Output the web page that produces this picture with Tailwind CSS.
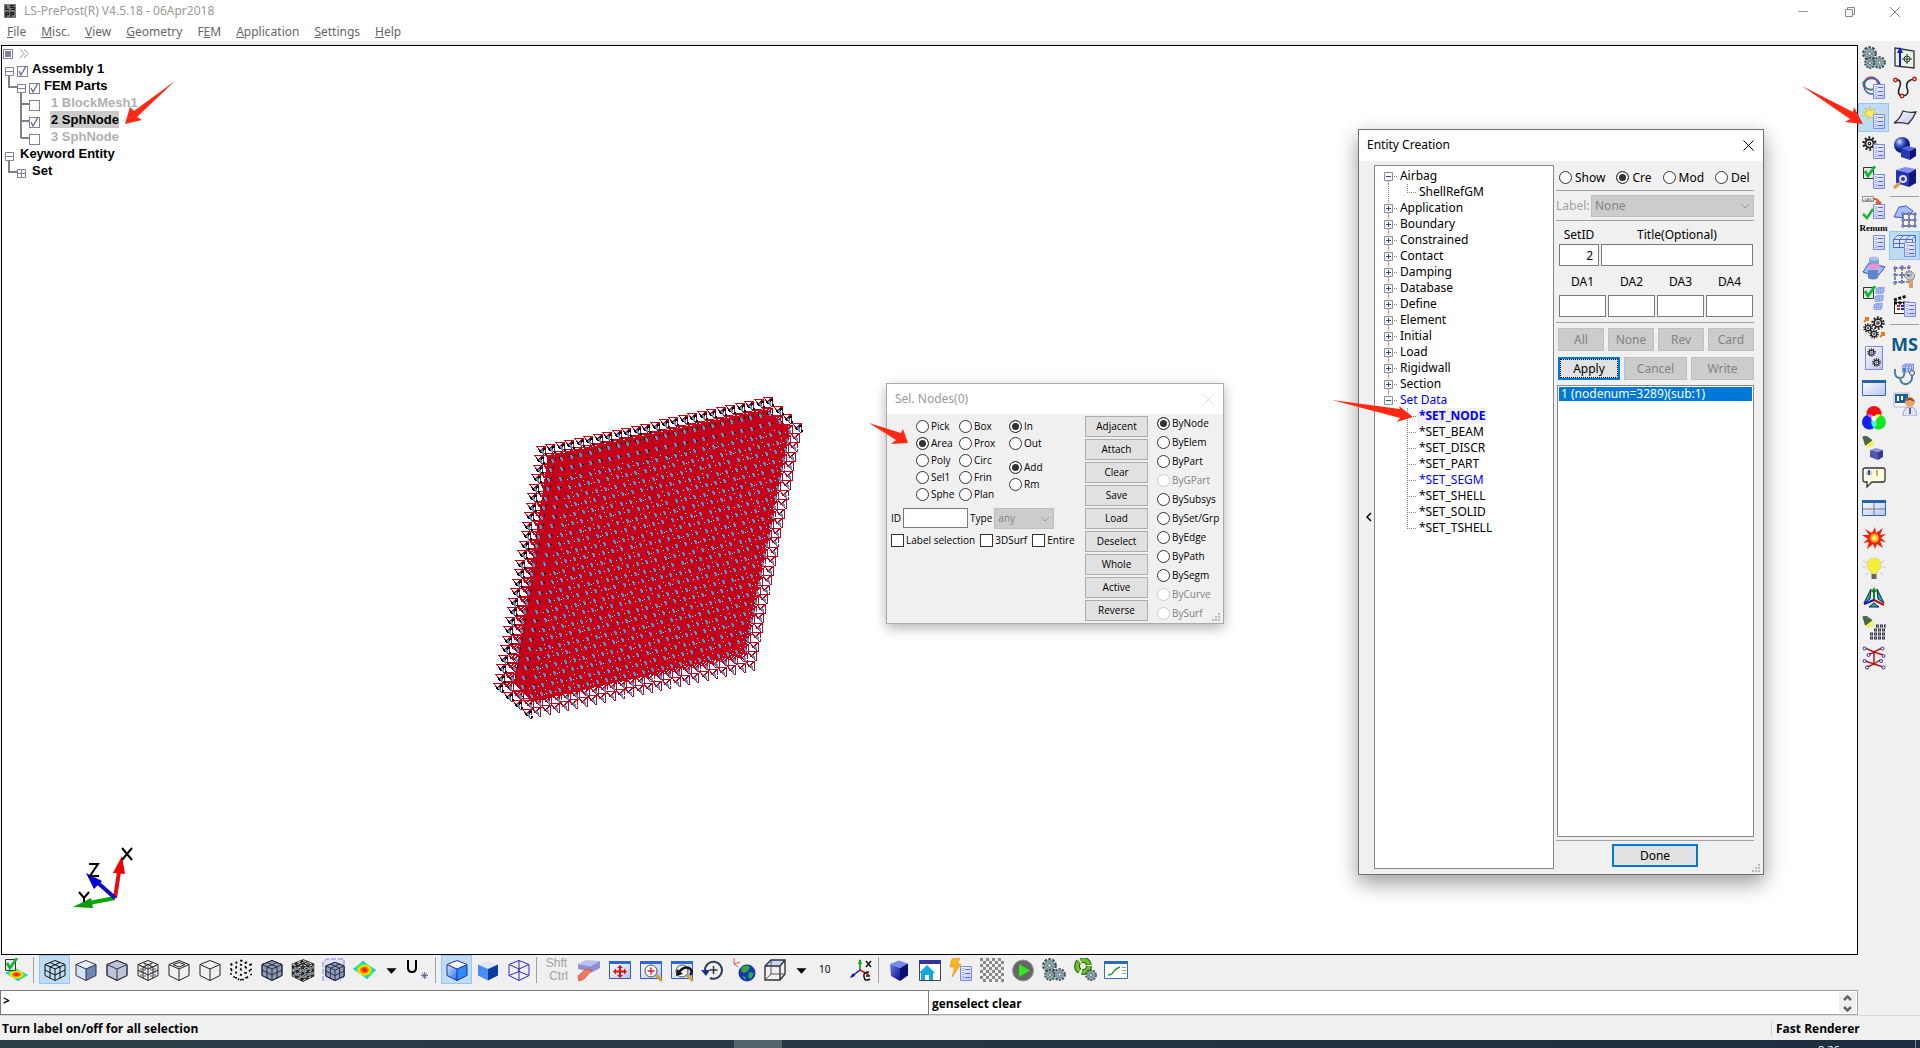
<!DOCTYPE html>
<html lang="en">
  <head>
    <meta charset="UTF-8" />
    <meta name="viewport" content="width=device-width, initial-scale=1.0" />
    <title>LS-PrePost(R) V4.5.18 - 06Apr2018</title>
    <script src="https://cdn.jsdelivr.net/npm/@tailwindcss/browser@4"></script>
  </head>
  <body class="relative flex h-screen flex-col overflow-hidden bg-[#f0f0f0] font-['Noto_Sans','Open_Sans',sans-serif] text-xs text-black">
    <!-- shared icon shapes -->
    <svg width="0" height="0" class="absolute">
      <defs>
        <linearGradient id="blueFace" x1="0" x2="1" y1="0" y2="1"><stop offset="0" stop-color="#dbe9ff" /><stop offset="1" stop-color="#1d6cf0" /></linearGradient>
        <linearGradient id="darkFace" x1="0" x2="1" y1="0" y2="1"><stop offset="0" stop-color="#6d7df0" /><stop offset="1" stop-color="#0a1080" /></linearGradient>
        <linearGradient id="paleFace" x1="0" x2="1" y1="0" y2="1"><stop offset="0" stop-color="#fff" /><stop offset="1" stop-color="#b8c4ee" /></linearGradient>
        <radialGradient id="heat"><stop offset="0" stop-color="#f00" /><stop offset=".3" stop-color="#f60" /><stop offset=".48" stop-color="#fe0" /><stop offset=".66" stop-color="#3e3" /><stop offset=".82" stop-color="#0de" /><stop offset="1" stop-color="#26f" /></radialGradient>
        <radialGradient id="ball" cx=".35" cy=".3"><stop offset="0" stop-color="#dfe8ff" /><stop offset=".5" stop-color="#3d5fd0" /><stop offset="1" stop-color="#0b1a80" /></radialGradient>
        <pattern id="checker" width="6" height="6" patternUnits="userSpaceOnUse"><path fill="#8a8a8a" d="M0 0h3v3H0zM3 3h3v3H3z" /></pattern>
        <symbol id="sheet" viewBox="0 0 24 24">
          <path fill="url(#paleFace)" stroke="#7c8adf" d="M11.500 8.500h11v14h-11z" />
          <path stroke="#5c6cc8" d="M16 11.500h5M16 15.500h5M16 19.500h5" />
          <path fill="#fff" stroke="#8f9be0" stroke-width=".7" d="M13 10.500h2v2h-2zM13 14.500h2v2h-2zM13 18.500h2v2h-2z" />
        </symbol>
        <symbol id="gear" viewBox="0 0 24 24">
          <circle cx="12" cy="12" r="9.500" fill="none" stroke="#222" stroke-width="4" stroke-dasharray="3 2.970" />
          <circle cx="12" cy="12" r="6.500" fill="#eee" stroke="#222" stroke-width="3" />
          <circle cx="12" cy="12" r="2" fill="#fff" stroke="#222" stroke-width="2" />
        </symbol>
        <symbol id="steelGear" viewBox="0 0 24 24">
          <circle cx="12" cy="12" r="9.500" fill="none" stroke="#3b4c50" stroke-width="4.500" stroke-dasharray="4 1.970" />
          <circle cx="12" cy="12" r="6.500" fill="#dcebf0" stroke="#7f9ca6" stroke-width="4.500" />
          <circle cx="12" cy="12" r="3" fill="#f4fafb" stroke="#2c3a3e" stroke-width="1.500" />
        </symbol>
        <symbol id="gears" viewBox="0 0 24 24">
          <use href="#steelGear" x="0" y="0" width="15" height="15" />
          <use href="#steelGear" x="2" y="11" width="12" height="12" />
          <use href="#steelGear" x="11" y="10" width="13" height="13" />
        </symbol>
        <symbol id="tick" viewBox="0 0 24 24">
          <path fill="#e8e8e8" stroke="#333" d="M1.500 3.500h10v11h-10z" />
          <path fill="none" stroke="#12b52c" stroke-width="2.800" d="M3 7l3 5 7-10" />
        </symbol>
        <symbol id="hex" viewBox="0 0 24 24"><path d="M12 2.500l10 4v11l-10 5-10-5v-11z" /></symbol>
        <symbol id="hexEdges" viewBox="0 0 24 24"><path fill="none" d="M12 2.500l10 4v11l-10 5-10-5v-11zM2 6.500l10 4.500 10-4.500M12 11v11.500" /></symbol>
        <symbol id="hexMesh" viewBox="0 0 24 24">
          <path fill="none" d="M12 2.500l10 4v11l-10 5-10-5v-11zM2 6.500l10 4.500 10-4.500M12 11v11.500M2 12l10 5 10-5M7 9v11.500M17 9v11.500M7 4.500l10 4.500M17 4.500l-10 4.500" />
        </symbol>
        <symbol id="window" viewBox="0 0 24 24">
          <path fill="url(#paleFace)" stroke="#2f5fc8" d="M1.500 3.500h21v17h-21z" />
          <path fill="#3067d8" d="M1 3h22v3H1z" />
        </symbol>
        <symbol id="lamp" viewBox="0 0 24 24">
          <path fill="#f4ee5a" d="M4 10l8-5 3 5-8 5z" />
          <path fill="#49694a" stroke="#24402a" stroke-width=".7" d="M1 1l4-1 7 5-8 6z" />
        </symbol>
        <symbol id="miniMesh" viewBox="0 0 24 24">
          <path fill="#c6d5ff" stroke="#4a66d8" stroke-width="1.200" d="M1 8l4-4h18v12l-4 4H1zM1 8h18v12M19 8l4-4M1 14h18l4-4M7 20V8l4-4M13 20V8l4-4" />
        </symbol>
      </defs>
    </svg>

    <header class="bg-white text-[#666]">
      <div class="flex h-[22px] items-center justify-between">
        <div class="flex items-center gap-2 pl-1 text-[#999]">
          <svg class="h-[14px] w-[12px]" viewBox="0 0 12 14"><path fill="#777" d="M0 0h12v14H0z" /><path fill="none" stroke="#111" stroke-width="1.200" d="M2 1.500v4h3M10 1.500H7v2h3v2H7M2 13V8.500h2.500v2H2M7 13V8.500h2.500v2H7" /></svg>
          <h1>LS-PrePost(R) V4.5.18 - 06Apr2018</h1>
        </div>
        <div class="flex gap-[27px] pr-[15px]">
          <button aria-label="Minimize"><svg class="size-[19px]" fill="none" stroke="#999"><path d="M4 9.500h10" /></svg></button>
          <button aria-label="Restore"><svg class="size-[19px]" fill="none" stroke="#888"><path d="M5.500 7.500h7v7h-7zM7.500 7V5.500h7v7H13" /></svg></button>
          <button aria-label="Close"><svg class="size-[19px]" fill="none" stroke="#888"><path d="M4 5l10 10M14 5L4 15" /></svg></button>
        </div>
      </div>
      <nav class="flex h-[19px] items-center gap-[15px] pt-px pl-[7px]">
        <a href="#"><u>F</u>ile</a>
        <a href="#"><u>M</u>isc.</a>
        <a href="#"><u>V</u>iew</a>
        <a href="#"><u>G</u>eometry</a>
        <a href="#">F<u>E</u>M</a>
        <a href="#"><u>A</u>pplication</a>
        <a href="#"><u>S</u>ettings</a>
        <a href="#"><u>H</u>elp</a>
      </nav>
    </header>

    <div class="flex min-h-0 flex-1">
      <div class="flex min-w-0 flex-1 flex-col pt-1">
        <!-- model view -->
        <main class="relative ml-px min-h-0 flex-1 border border-black bg-white">
          <svg class="absolute top-0 left-0 h-[140px] w-[60px]" fill="none" stroke="#808080" stroke-width="2">
            <path d="M7 27v14h10M19 44v48M19 58h10M19 75h10M19 92h10M7 113v13h10" />
          </svg>
          <div class="relative font-['Liberation_Sans',sans-serif] text-[13px] font-bold leading-[17px]">
            <div class="flex h-[14px] items-center gap-1 pl-px pt-px">
              <button aria-label="Dock" class="size-[10px] border border-[#8080a0] bg-[#8080a0] shadow-[inset_0_0_0_1px_#fff]"></button>
              <button aria-label="Expand" class="pl-[2px]"><svg class="size-[11px]" fill="none" stroke="#9a9ab4"><path d="M1 1l4 4.500-4 4.500M5 1l4 4.500-4 4.500" /></svg></button>
            </div>
            <ul class="[&_input]:mt-[6px] [&_input]:size-[11px] [&_input]:shrink-0 [&_input]:appearance-none [&_input]:border [&_input]:border-[#8080a0] [&_input]:bg-white [&_label]:flex [&_label]:items-center [&_li]:flex [&_li]:h-[17px] [&_li]:items-center [&_svg]:mt-[6px] [&_svg]:shrink-0 [&_svg]:bg-white">
              <li class="gap-[3px] pl-[3px]"><svg class="size-[9px]" fill="none" stroke="#8080a0"><path d="M.5.5h8v8h-8zM1 4.500h7" /></svg><label class="gap-1"><input type="checkbox" checked />Assembly 1</label></li>
              <li class="gap-[3px] pl-[15px]"><svg class="size-[9px]" fill="none" stroke="#8080a0"><path d="M.5.5h8v8h-8zM1 4.500h7" /></svg><label class="gap-1"><input type="checkbox" checked />FEM Parts</label></li>
              <li class="pl-[27px] text-[#b0b0b0]"><label class="gap-[11px]"><input type="checkbox" />1 BlockMesh1</label></li>
              <li class="pl-[27px]"><label class="gap-[10px]"><input type="checkbox" checked /><span class="bg-[#cbcbcb] pl-px">2 SphNode</span></label></li>
              <li class="pl-[27px] text-[#b0b0b0]"><label class="gap-[11px]"><input type="checkbox" />3 SphNode</label></li>
              <li class="gap-[6px] pl-[3px]"><svg class="size-[9px]" fill="none" stroke="#8080a0"><path d="M.5.5h8v8h-8zM1 4.500h7" /></svg>Keyword Entity</li>
              <li class="gap-[6px] pl-[15px]"><svg class="size-[9px]" fill="none" stroke="#8080a0"><path d="M.5.5h8v8h-8zM1 4.500h7M4.500 1v7" /></svg>Set</li>
            </ul>
          </div>
          <!-- check marks of the part tree -->
          <svg class="pointer-events-none absolute top-0 left-0 h-[100px] w-[50px]" fill="none" stroke="#70709a" stroke-width="1.500">
            <path d="M17 25l2 4 5-9M29 42l2 4 5-9M29 76l2 4 5-9" />
          </svg>

          <svg id="mesh" class="absolute top-[344px] left-[480px] h-[340px] w-[340px]" shape-rendering="crispEdges" fill="none"></svg>

          <svg class="absolute bottom-[40px] left-[68px] h-[70px] w-[70px]" viewBox="70 844 70 70">
            <g stroke-width="4"><path stroke="#0a0" d="M115 898l-26 5" /><path stroke="#d11" d="M115 898l4-26" /><path stroke="#1010b8" d="M115 898l-18-16" /></g>
            <path fill="#0a9a0a" d="M73 907l18-9 2 10z" /><path fill="#e00" d="M122 856l3 18-12-1z" /><path fill="#0000d8" d="M86 873l16 8-8 8z" />
            <g fill="none" stroke="#000" stroke-width="2"><path d="M79 892l5 6 5-6M84 898v4" /><path d="M122 848l10 12M132 848l-10 12" /><path d="M89 864h9l-8 12h9" /></g>
          </svg>

          <!-- Sel. Nodes window -->
          <section class="absolute top-[337px] left-[884px] flex h-[241px] w-[338px] flex-col border border-[#aaa] bg-[#f0f0f0] font-['Open_Sans',sans-serif] text-[10px] leading-[17px] shadow-[0_4px_12px_rgba(0,0,0,0.3)]">
            <div class="flex h-[30px] shrink-0 items-center justify-between bg-white pr-[9px] pl-2 font-['Noto_Sans',sans-serif] text-xs text-[#999]">
              <h2>Sel. Nodes(0)</h2>
              <button aria-label="Close"><svg class="size-[11px]" fill="none" stroke="#ddd"><path d="M.5.5l10 10M10.500.5l-10 10" /></svg></button>
            </div>
            <div class="flex flex-1 [&_input[type=radio]]:size-[13px] [&_input[type=radio]]:shrink-0 [&_input[type=radio]]:appearance-none [&_input[type=radio]]:rounded-full [&_input[type=radio]]:border [&_input[type=radio]]:border-[#333] [&_input[type=radio]]:bg-white [&_input[type=radio]:checked]:bg-[#333] [&_input[type=radio]:checked]:shadow-[inset_0_0_0_2px_#fff] [&_input[type=radio]:disabled]:border-[#ccc] [&_label]:flex [&_label]:items-center [&_label]:gap-[2px] [&_label]:whitespace-nowrap">
              <div class="w-[198px] shrink-0 pt-1">
                <div class="flex pl-[29px]">
                  <div class="w-[43px]">
                    <label><input type="radio" name="pick" />Pick</label>
                    <label><input type="radio" name="pick" checked />Area</label>
                    <label><input type="radio" name="pick" />Poly</label>
                    <label><input type="radio" name="pick" />Sel1</label>
                    <label><input type="radio" name="pick" />Sphe</label>
                  </div>
                  <div class="w-[50px]">
                    <label><input type="radio" name="pick" />Box</label>
                    <label><input type="radio" name="pick" />Prox</label>
                    <label><input type="radio" name="pick" />Circ</label>
                    <label><input type="radio" name="pick" />Frin</label>
                    <label><input type="radio" name="pick" />Plan</label>
                  </div>
                  <div>
                    <label><input type="radio" name="side" checked />In</label>
                    <label><input type="radio" name="side" />Out</label>
                    <div class="h-[7px]"></div>
                    <label><input type="radio" name="mode" checked />Add</label>
                    <label><input type="radio" name="mode" />Rm</label>
                  </div>
                </div>
                <div class="mt-1 flex h-[22px] items-center gap-[2px] pl-1">
                  <label for="nodeId">ID</label>
                  <input id="nodeId" type="text" class="h-[20px] w-[65px] border border-[#7a7a7a] bg-white px-1" />
                  <label for="nodeType">Type</label>
                  <div class="relative">
                    <select id="nodeType" disabled class="block h-[21px] w-[60px] appearance-none border border-[#bfbfbf] bg-[#ccc] px-[3px] text-[#838383]"><option>any</option></select>
                    <svg class="absolute top-2 right-[5px] h-[6px] w-[8px]" fill="none" stroke="#999"><path d="M0 1l4 4 4-4" /></svg>
                  </div>
                </div>
                <div class="mt-[3px] flex gap-[5px] pl-1 [&_input]:size-[13px] [&_input]:appearance-none [&_input]:border [&_input]:border-[#333] [&_input]:bg-white">
                  <label><input type="checkbox" />Label selection</label>
                  <label><input type="checkbox" />3DSurf</label>
                  <label><input type="checkbox" />Entire</label>
                </div>
              </div>
              <div class="flex w-[63px] shrink-0 flex-col gap-[2px] pt-[2px] [&_button]:h-[21px] [&_button]:border [&_button]:border-[#adadad] [&_button]:bg-[#e1e1e1]">
                <button>Adjacent</button>
                <button>Attach</button>
                <button>Clear</button>
                <button>Save</button>
                <button>Load</button>
                <button>Deselect</button>
                <button>Whole</button>
                <button>Active</button>
                <button>Reverse</button>
              </div>
              <div class="pl-[9px] [&_label]:h-[19px]">
                <label><input type="radio" name="by" checked />ByNode</label>
                <label><input type="radio" name="by" />ByElem</label>
                <label><input type="radio" name="by" />ByPart</label>
                <label class="text-[#838383]"><input type="radio" name="by" disabled />ByGPart</label>
                <label><input type="radio" name="by" />BySubsys</label>
                <label><input type="radio" name="by" />BySet/Grp</label>
                <label><input type="radio" name="by" />ByEdge</label>
                <label><input type="radio" name="by" />ByPath</label>
                <label><input type="radio" name="by" />BySegm</label>
                <label class="text-[#838383]"><input type="radio" name="by" disabled />ByCurve</label>
                <label class="text-[#838383]"><input type="radio" name="by" disabled />BySurf</label>
              </div>
            </div>
            <svg class="absolute right-[3px] bottom-[2px] size-[8px]" fill="#bbb"><path d="M6 0h2v2H6zM3 3h2v2H3zM6 3h2v2H6zM0 6h2v2H0zM3 6h2v2H3zM6 6h2v2H6z" /></svg>
          </section>

          <!-- Entity Creation window -->
          <section class="absolute top-[83px] left-[1356px] flex h-[746px] w-[406px] flex-col border border-[#707070] bg-[#f0f0f0] leading-[16px] shadow-[0_8px_20px_rgba(0,0,0,0.4)]">
            <div class="flex h-[31px] shrink-0 items-center justify-between bg-white pr-[9px] pb-px pl-2">
              <h2>Entity Creation</h2>
              <button aria-label="Close"><svg class="size-[11px]" fill="none" stroke="#000"><path d="M.5.5l10 10M10.500.5l-10 10" /></svg></button>
            </div>
            <div class="flex min-h-0 flex-1 pt-1 pb-[5px]">
              <button aria-label="Collapse" class="flex w-[15px] items-center justify-end pr-[2px]"><svg class="h-[10px] w-[6px]" fill="none" stroke="#000" stroke-width="1.500"><path d="M5 1L1 5l4 4" /></svg></button>
              <div class="w-[181px] border border-[#828790] bg-white pt-[2px] pl-[9px]">
                <ul id="entityTree"></ul>
              </div>
              <form class="flex flex-1 flex-col pt-1 pr-[9px] pl-[2px] [&_hr]:border-t [&_hr]:border-[#a0a0a0] [&_input[type=text]]:h-[22px] [&_input[type=text]]:border [&_input[type=text]]:border-[#7a7a7a] [&_input[type=text]]:bg-white [&_input[type=text]]:px-[5px]">
                <div class="flex h-[21px] shrink-0 items-center gap-[11px] pb-1 pl-[3px] [&_input]:size-[13px] [&_input]:appearance-none [&_input]:rounded-full [&_input]:border [&_input]:border-[#333] [&_input]:bg-white [&_input:checked]:bg-[#333] [&_input:checked]:shadow-[inset_0_0_0_2px_#fff] [&_label]:flex [&_label]:items-center [&_label]:gap-[3px]">
                  <label><input type="radio" name="action" />Show</label>
                  <label><input type="radio" name="action" checked />Cre</label>
                  <label><input type="radio" name="action" />Mod</label>
                  <label><input type="radio" name="action" />Del</label>
                </div>
                <hr />
                <div class="flex h-[29px] shrink-0 items-center">
                  <label for="entityLabel" class="w-[35px] text-[#a0a0a0]">Label:</label>
                  <div class="relative flex-1">
                    <select id="entityLabel" disabled class="block h-[22px] w-full appearance-none border border-[#bfbfbf] bg-[#ccc] px-[3px] text-[#838383]"><option>None</option></select>
                    <svg class="absolute top-2 right-1 h-[6px] w-[9px]" fill="none" stroke="#999"><path d="M0 1l4 4 4-4" /></svg>
                  </div>
                </div>
                <hr />
                <div class="flex gap-[2px] pt-[6px] pl-[3px]">
                  <div class="flex w-[40px] flex-col"><label for="setId" class="h-[17px] text-center">SetID</label><input id="setId" type="text" value="2" class="w-[40px] text-right" /></div>
                  <div class="flex w-[152px] flex-col"><label for="setTitle" class="h-[17px] text-center">Title(Optional)</label><input id="setTitle" type="text" class="w-[152px]" /></div>
                </div>
                <div class="flex gap-[2px] pt-2 pl-[3px] [&_div]:flex [&_div]:flex-col [&_input]:w-[47px] [&_label]:h-[21px] [&_label]:text-center">
                  <div><label for="da1">DA1</label><input id="da1" type="text" /></div>
                  <div><label for="da2">DA2</label><input id="da2" type="text" /></div>
                  <div><label for="da3">DA3</label><input id="da3" type="text" /></div>
                  <div><label for="da4">DA4</label><input id="da4" type="text" /></div>
                </div>
                <hr class="mt-[5px]" />
                <div class="flex gap-1 pt-[5px] pl-[2px] [&_button]:h-[23px] [&_button]:w-[46px] [&_button]:border [&_button]:border-[#bfbfbf] [&_button]:bg-[#ccc] [&_button]:text-[#838383]">
                  <button type="button" disabled>All</button>
                  <button type="button" disabled>None</button>
                  <button type="button" disabled>Rev</button>
                  <button type="button" disabled>Card</button>
                </div>
                <div class="flex gap-1 pt-[6px] pl-[2px]">
                  <button type="button" class="h-[23px] w-[62px] border-2 border-[#0078d7] bg-[#e1e1e1] outline-1 -outline-offset-3 outline-dotted outline-black">Apply</button>
                  <button type="button" disabled class="h-[23px] w-[63px] border border-[#bfbfbf] bg-[#ccc] text-[#838383]">Cancel</button>
                  <button type="button" disabled class="h-[23px] w-[63px] border border-[#bfbfbf] bg-[#ccc] text-[#838383]">Write</button>
                </div>
                <ul class="mt-[5px] ml-px flex-1 border border-[#828790] bg-white p-px">
                  <li class="h-[14px] bg-[#0078d7] pl-[2px] leading-[14px] text-white">1 (nodenum=3289)(sub:1)</li>
                </ul>
                <hr class="mt-[3px]" />
                <button type="button" class="mt-[3px] mb-[2px] h-[23px] w-[86px] shrink-0 self-center border-2 border-[#0078d7] bg-[#e1e1e1]">Done</button>
              </form>
            </div>
            <svg class="absolute right-[3px] bottom-[2px] size-[8px]" fill="#bbb"><path d="M6 0h2v2H6zM3 3h2v2H3zM6 3h2v2H6zM0 6h2v2H0zM3 6h2v2H3zM6 6h2v2H6z" /></svg>
          </section>
        </main>

        <!-- view toolbar -->
        <div class="flex h-[35px] shrink-0 items-start [&_button]:flex [&_button]:h-[29px] [&_button]:w-[31px] [&_button]:shrink-0 [&_button]:items-center [&_button]:justify-center [&_svg]:size-[24px]">
          <button aria-label="Plot"><svg viewBox="0 0 24 24"><path fill="url(#heat)" d="M1 15l10-5 13 7-10 6z" /><use href="#tick" width="24" height="24" y="-2" /></svg></button>
          <div class="mt-[2px] mr-[5px] ml-[2px] h-[26px] w-px bg-[#a0a0a0]"></div>
          <button aria-label="Mesh" class="border border-[#90c8f6] bg-[#c0dcf3]"><svg stroke="#111" fill="none"><use href="#hexMesh" width="24" height="24" /></svg></button>
          <button aria-label="Shaded"><svg viewBox="0 0 24 24"><path fill="#e6eeff" d="M12 2.500l10 4-10 4.500L2 6.500z" /><path fill="#d4e0fa" d="M2 6.500L12 11v11.500l-10-5z" /><path fill="#6f83b4" d="M12 11l10-4.500v11l-10 5z" /><use href="#hexEdges" width="24" height="24" stroke="#334" /></svg></button>
          <button aria-label="Flat"><svg fill="#bcc4da" stroke="#334"><use href="#hex" width="24" height="24" /><use href="#hexEdges" width="24" height="24" /></svg></button>
          <button aria-label="Hidden"><svg stroke="#222" viewBox="0 0 24 24"><use href="#hexMesh" width="24" height="24" /><path fill="none" stroke="#556" stroke-dasharray="2 1" d="M5 7v12M19 7v12M9 5v16M15 5v16M3 14l9-5 9 5" /></svg></button>
          <button aria-label="Feature"><svg stroke="#222" viewBox="0 0 24 24"><use href="#hexEdges" width="24" height="24" /><path fill="none" d="M6 6.500l6-2 6 2-6 2.500z" /></svg></button>
          <button aria-label="Edge"><svg stroke="#222"><use href="#hexEdges" width="24" height="24" /></svg></button>
          <button aria-label="Points"><svg stroke="#111" stroke-width="2" stroke-dasharray="1.500 3.500"><use href="#hexMesh" width="24" height="24" /></svg></button>
          <button aria-label="Shaded mesh"><svg fill="#8f9dba" stroke="#222b3c"><use href="#hex" width="24" height="24" /><use href="#hexMesh" width="24" height="24" /></svg></button>
          <button aria-label="Shrink"><svg fill="#8f9dba" stroke="#222" viewBox="0 0 24 24"><use href="#hex" width="24" height="24" /><use href="#hexMesh" width="24" height="24" stroke-width="2.500" /><use href="#hexMesh" width="24" height="24" stroke="#e8e8e8" stroke-width="1" stroke-dasharray="3 3" /></svg></button>
          <button aria-label="Transparent"><svg viewBox="0 0 24 24"><path fill="#dfe2f8" stroke="#7c80e8" stroke-dasharray="5 2" d="M1 23V4l4-3h17v18l-4 4" /><g fill="#8f9dba" stroke="#222b3c"><use href="#hex" x="2" y="2" width="22" height="22" /><use href="#hexMesh" x="2" y="2" width="22" height="22" /></g></svg></button>
          <button aria-label="Fringe"><svg viewBox="0 0 24 24"><path fill="url(#heat)" d="M0 11l10-8 13 9-9 9z" /></svg></button>
          <button aria-label="Fringe options" class="max-w-[22px]"><svg viewBox="0 0 24 24"><path d="M7 10h11l-5.500 6z" /></svg></button>
          <button aria-label="Unreferenced nodes"><svg viewBox="0 0 24 24" fill="none"><path stroke="#000" stroke-width="2" d="M2 2v8q0 4 4 4t4-4V2" /><path stroke="#6a6a9a" d="M15 17.500h7M18.500 14v7M16 15l5 5M21 15l-5 5" /></svg></button>
          <div class="mt-[2px] mr-[5px] ml-[2px] h-[26px] w-px bg-[#a0a0a0]"></div>
          <button aria-label="Solid view" class="border border-[#90c8f6] bg-[#c0dcf3]"><svg viewBox="0 0 24 24"><path fill="#fff" d="M12 2.500l10 4-10 4.500L2 6.500z" /><path fill="url(#blueFace)" d="M2 6.500L12 11v11.500l-10-5z" /><path fill="#2c8cf8" d="M12 11l10-4.500v11l-10 5z" /><use href="#hexEdges" width="24" height="24" stroke="#1c2f9c" /></svg></button>
          <button aria-label="Smooth view"><svg viewBox="0 0 24 24"><path fill="#e0e5ee" d="M12 2.500l10 4-10 4.500L2 6.500z" /><path fill="#4c8cf5" d="M2 6.500L12 11v11.500l-10-5z" /><path fill="#0c3ca0" d="M12 11l10-4.500v11l-10 5z" /></svg></button>
          <button aria-label="Wire view"><svg stroke="#2b2bc4" fill="none"><use href="#hexEdges" width="24" height="24" /><path d="M12 2.500v11l10 4M12 13.500l-10 4" /></svg></button>
          <div class="mt-[2px] mr-[5px] ml-[2px] h-[26px] w-px bg-[#a0a0a0]"></div>
          <button class="flex-col pr-[2px] font-['Liberation_Sans',sans-serif] leading-[13px] text-[#a0a0a0]"><span>Shft</span><span class="pl-1">Ctrl</span></button>
          <button aria-label="Clear highlight"><svg viewBox="0 0 24 24"><path fill="#b9c0ee" d="M1 6l8-4 14 1-7 5z" /><path fill="#8d93d2" d="M1 6l13 2v6L1 11zM14 8l9-5v7l-9 5z" /><path fill="#f0785c" stroke="#c8442a" stroke-width=".7" d="M1 18l8-7 6 1-8 9-5 2z" /></svg></button>
          <button aria-label="Auto center"><svg viewBox="0 0 24 24"><use href="#window" width="24" height="24" /><path fill="#d01818" d="M12 7l3 3h-2v2.500h3v-2l3 3-3 3v-2h-3V17h2l-3 3-3-3h2v-2.500H8v2l-3-3 3-3v2h3V10H9z" /></svg></button>
          <button aria-label="Zoom in"><svg viewBox="0 0 24 24"><use href="#window" width="24" height="24" /><path stroke="#d5a030" stroke-width="3" d="M17 17l6 6" /><circle cx="12" cy="13" r="6" fill="#f6f8ff" stroke="#555" /><path stroke="#d22" stroke-width="1.500" d="M8.500 13h7M12 9.500v7" /></svg></button>
          <button aria-label="Zoom back"><svg viewBox="0 0 24 24" fill="none"><use href="#window" width="24" height="24" /><path stroke="#d5a030" stroke-width="3" d="M17 17l6 6" /><circle cx="12" cy="13" r="6" fill="#f6f8ff" stroke="#555" /><path stroke="#111" stroke-width="2.500" d="M9 14q5-6 10-4 5 3 1 7" /><path fill="#111" d="M6 18l1-7 6 5z" /></svg></button>
          <button aria-label="Rotate"><svg viewBox="0 0 24 24" fill="none"><path stroke="#33415c" stroke-width="2" d="M4 13a8.500 8.500 0 1 1 5 7" /><path fill="#14328c" d="M0 12h9l-4 6z" /><path stroke="#333" stroke-width="1.500" d="M8.500 12h8M12.500 8v8" /></svg></button>
          <button aria-label="Globe"><svg viewBox="0 0 24 24"><path fill="none" stroke="#d55" d="M2 0v6l4 3M2 6l6-2" /><circle cx="15" cy="15" r="8.500" fill="#1b32b8" /><path fill="#2fae38" d="M10 9q5-3 8 0l-2 4-4 2-3-2zM17 14l5 1-3 6-3-2zM10 18l4 1-1 3z" /></svg></button>
          <button aria-label="View box"><svg viewBox="0 0 24 24"><path fill="#c7d3ff" d="M2 8l6-6h14l-5 6z" /><path fill="none" stroke="#333" stroke-width="1.400" d="M2 8l6-6h14v14l-5 6H2zM2 8h15v14M17 8l5-6" /><path fill="none" stroke="#555" d="M8 3v13h13M8 16l-6 6" /></svg></button>
          <button aria-label="View options" class="max-w-[22px]"><svg viewBox="0 0 24 24"><path d="M7 10h11l-5.500 6z" /></svg></button>
          <input type="text" aria-label="Rotation step" value="10" class="mt-[7px] h-[14px] w-[33px] bg-transparent pl-[7px] text-[10px] leading-[14px]" />
          <button aria-label="Axes"><svg viewBox="0 0 24 24" fill="none" stroke-width="1.500"><path stroke="#080" d="M11 12V2" /><path stroke="#11c" d="M11 12l-9 7" /><path stroke="#c11" d="M11 12l9 5" /><path fill="#0a0" d="M9 6l2-5 2 5z" /><path fill="#11c" d="M1 20l3-5 2 3z" /><path stroke="#111" d="M17 3l5 6M22 3l-5 6M20 14q-6 0-5 5t6 2M17 18h4" /></svg></button>
          <div class="mt-[2px] mr-[4px] ml-[2px] h-[26px] w-px bg-[#a0a0a0]"></div>
          <button aria-label="Part"><svg viewBox="0 0 24 24"><path fill="#7a8ae8" d="M12 2.500l9 3-8 4.500L3 6z" /><path fill="url(#darkFace)" d="M3 6l10 4v13L4 18z" /><path fill="#0a0f72" d="M13 10l8-4.500v12L13 23z" /></svg></button>
          <button aria-label="Home"><svg viewBox="0 0 24 24"><path fill="#fff" stroke="#444" d="M1.500 2.500h21v20h-21z" /><path fill="#33339c" d="M1 2h22v4H1z" /><path fill="#12a8dc" d="M1 15l8-8 8 8h-2v7h-4v-5H7v5H3v-7z" /></svg></button>
          <button aria-label="Quick keyword"><svg viewBox="0 0 24 24"><path fill="#ffb81e" stroke="#e8820a" stroke-width=".7" d="M3 1l8-1-3 6 4 0-9 13 3-10H1z" /><use href="#sheet" width="24" height="24" /></svg></button>
          <button aria-label="Checker"><svg><path fill="url(#checker)" d="M0 0h24v24H0z" /></svg></button>
          <button aria-label="Run"><svg viewBox="0 0 24 24"><circle cx="12" cy="12.500" r="10.500" fill="#666" stroke="#999" /><path fill="#2ee81a" d="M8 6l11 6.500L8 19z" /></svg></button>
          <button aria-label="Settings"><svg><use href="#gears" width="24" height="24" /></svg></button>
          <button aria-label="Recycle"><svg viewBox="0 0 24 24"><circle cx="10" cy="8" r="6" fill="none" stroke="#2c6a10" stroke-width="6" stroke-dasharray="10.500 2.060" /><circle cx="10" cy="8" r="6" fill="none" stroke="#6cc42c" stroke-width="3.500" stroke-dasharray="10 2.560" /><use href="#steelGear" x="12" y="11" width="12" height="12" /></svg></button>
          <button aria-label="Graph"><svg viewBox="0 0 24 24"><path fill="#fff" stroke="#3470b4" d="M.5 3.500h23v17H.5z" /><path fill="#2d6cb5" d="M0 3h24v3H0z" /><path fill="none" stroke="#1c9c2c" stroke-width="1.500" d="M4 17q4 0 6-4 3-3 6-4" /><path stroke="#999" d="M18 9.500h4M18 12.500h4M18 15.500h4" /></svg></button>
        </div>

        <!-- command line -->
        <div class="flex h-[25px] shrink-0 font-['Open_Sans',sans-serif] font-bold">
          <input type="text" aria-label="Command" value="&gt;" class="h-[25px] w-1/2 border border-[#7a7a7a] bg-white px-[2px] pb-1" />
          <div class="flex w-1/2 border border-l-0 border-[#a5a5ad] bg-white">
            <input type="text" aria-label="Command history" value="genselect clear" readonly class="min-w-0 flex-1 px-[3px] pt-[2px]" />
            <div class="m-px flex w-[17px] items-center justify-center bg-[#f0f0f0]"><svg class="h-[18px] w-[9px]" fill="none" stroke="#666" stroke-width="2.500"><path d="M1 6l3.500-3.500L8 6M1 13l3.500 3.500L8 13" /></svg></div>
          </div>
        </div>
      </div>

      <!-- module toolbar -->
      <aside class="flex w-[62px] shrink-0 pt-[2px] [&_button]:flex [&_button]:h-[29px] [&_button]:w-[31px] [&_button]:shrink-0 [&_button]:items-center [&_button]:justify-center [&_svg]:size-[24px]">
        <div class="flex flex-col gap-px">
          <button aria-label="Model settings"><svg><use href="#gears" width="24" height="24" /></svg></button>
          <button aria-label="Keyword manager"><svg viewBox="0 0 24 24" fill="none" stroke-width="1.500"><circle cx="9" cy="7.500" r="6.500" stroke="#d44" /><ellipse cx="9" cy="8" rx="8" ry="5.500" stroke="#2a9a5a" /><circle cx="10" cy="10" r="8" stroke="#4455c8" /><use href="#sheet" width="24" height="24" stroke-width="1" /></svg></button>
          <button aria-label="Create entity" class="border border-[#90c8f6] bg-[#c0dcf3]"><svg viewBox="0 0 24 24"><path fill="#fff15c" stroke="#cdb62c" stroke-width=".6" d="M8 0l1 5L13 2l-2 4.500 4 1-4 1.500 1 4-4-3-2 3-.500-4-4.500 1.500 3-3.500L1 6l4 0-2-4 4 3z" /><use href="#sheet" width="24" height="24" /></svg></button>
          <button aria-label="Part data"><svg><use href="#gear" width="15" height="15" /><use href="#sheet" width="24" height="24" /></svg></button>
          <button aria-label="Model check"><svg><use href="#tick" width="24" height="24" y="-2" /><use href="#sheet" width="24" height="24" /></svg></button>
          <button aria-label="Keyword check"><svg viewBox="0 0 24 24"><path fill="#fff" stroke="#777" stroke-width=".8" d="M.5.5h11v5H.5z" /><text x="1" y="5" font-size="5" font-family="Liberation Serif, serif">ABC</text><path fill="none" stroke="#e2501a" stroke-width="2" d="M12 3q5 0 5 5M14 6l3 3 2-3" /><use href="#sheet" width="24" height="24" /><path fill="none" stroke="#1fb52a" stroke-width="2.500" d="M1 18l4 4 6-9" /></svg></button>
          <button class="flex-col"><span class="h-[9px] font-['Liberation_Serif',serif] text-[9px] leading-[9px] font-bold">Renum</span><svg viewBox="0 6 24 18" class="max-h-[18px]"><use href="#sheet" width="24" height="24" /></svg></button>
          <button aria-label="Section plane"><svg viewBox="0 0 24 24"><path fill="#9fc0ee" stroke="#2a50c0" d="M1 16L7 7l16 4-8 10z" /><path fill="#5d86c4" d="M6 14h10v8q-5 3-10 0z" /><path fill="#7fa3d4" d="M7 2h10v8H7z" /><ellipse cx="12" cy="2.500" rx="5" ry="2" fill="#a9c6ea" /><ellipse cx="12" cy="10.500" rx="6" ry="2.500" fill="#ff8ad0" /></svg></button>
          <button aria-label="Mesh check"><svg><use href="#tick" width="24" height="24" y="-2" /><use href="#miniMesh" x="12" y="0" width="12" height="9" /><use href="#miniMesh" x="11" y="8" width="12" height="9" /><use href="#miniMesh" x="10" y="16" width="12" height="9" /></svg></button>
          <button aria-label="Move parts"><svg viewBox="0 0 24 24"><use href="#gear" x="9" y="0" width="14" height="14" /><use href="#gear" x="1" y="7" width="10" height="10" /><use href="#gear" x="7" y="13" width="10" height="10" /><path fill="none" stroke="#e87a1c" stroke-width="2" d="M2 6l4-4M3 2h3v3M18 21l4-4M19 17h3v3" /></svg></button>
          <button aria-label="Compare parts"><svg viewBox="0 0 24 24"><path fill="url(#paleFace)" stroke="#7c8adf" d="M3.500.5h17v23h-17z" /><use href="#gear" x="5" y="2" width="9" height="9" /><use href="#gear" x="10" y="12" width="9" height="9" /></svg></button>
          <button aria-label="Window"><svg viewBox="0 0 24 24"><path fill="url(#paleFace)" stroke="#2c6cb0" d="M.5 4.500h23v15H.5z" /><path fill="#2462ac" d="M0 4h24v3H0z" /></svg></button>
          <button aria-label="Color"><svg viewBox="0 0 24 24"><circle cx="12" cy="7.500" r="7.500" fill="#f01010" /><circle cx="7.500" cy="16" r="7.500" fill="#1020f0" /><circle cx="16.500" cy="16" r="7.500" fill="#10e820" /><path fill="#f060f0" d="M5 9q5-2 7 2l-1 3z" /><path fill="#fff030" d="M19 9q-5-2-7 2l1 3z" /><path fill="#50f0f0" d="M12 22q-4-5-1-9h2q4 5-1 9z" /><circle cx="12" cy="12.500" r="2.500" fill="#fff" /></svg></button>
          <button aria-label="Appearance"><svg viewBox="0 0 24 24"><use href="#lamp" width="20" height="20" /><path fill="#8c92e0" d="M8 14l6-2 7 2-5 2z" /><path fill="#5158b4" d="M8 14l8 2v8l-8-3z" /><path fill="#34398c" d="M16 16l5-2v7l-5 3z" /></svg></button>
          <button aria-label="Annotation"><svg viewBox="0 0 24 24"><path fill="#fffde0" stroke="#333" stroke-width="1.300" d="M3 2h18q2 0 2 2v10q0 2-2 2H10l-5 5v-5H3q-2 0-2-2V4q0-2 2-2z" /><ellipse cx="7" cy="7" rx="3.500" ry="2.500" fill="#b8d0f4" /><path stroke="#224" stroke-width="1.500" d="M7 4v5" /><path stroke="#c88a40" stroke-width="1.500" d="M15 4v6" /></svg></button>
          <button aria-label="Split window"><svg viewBox="0 0 24 24"><path fill="url(#paleFace)" stroke="#2c6cb0" d="M.5 4.500h23v15H.5z" /><path fill="#2462ac" d="M0 4h24v3H0z" /><path stroke="#778" d="M12 7v12M1 13h22" /></svg></button>
          <button aria-label="Explode"><svg viewBox="0 0 24 24"><path fill="#f02010" d="M13 1l1 6 7-5-3 7 6-1-5 4 5 4-6-1 3 7-6-4-2 5-2-5-6 5 2-7-6 1 5-4-6-4 7 0-4-6 7 4z" /><circle cx="12.500" cy="12" r="4.500" fill="#ff9a20" /><circle cx="12.500" cy="12" r="2.500" fill="#fff260" /></svg></button>
          <button aria-label="Light"><svg viewBox="0 0 24 24"><path stroke="#ccc" d="M1 4l4 3M23 4l-4 3M0 11h4M20 11h4M3 19l3-2M21 19l-3-2" /><path fill="#f5ef3c" stroke="#d3cf80" stroke-width=".7" d="M12 2q7 0 7 7 0 4-4 7v2H9v-2q-4-3-4-7 0-7 7-7z" /><path fill="#666" d="M9.500 18h5v5h-5z" /></svg></button>
          <button aria-label="Coordinates"><svg viewBox="0 0 24 24" fill="none"><path fill="#2aa8cc" stroke="#123" d="M9 3l-7 14 6-4zM15 3l7 14-6-4zM7 21h10l-5-4z" /><path stroke="#0a8a1a" stroke-width="2" d="M12 14V4M10 6l2-3 2 3" /><path stroke="#1111cc" stroke-width="2" d="M12 14l-10 4" /><path stroke="#c01010" stroke-width="2" d="M12 14l10 5" /></svg></button>
          <button aria-label="Show nodes"><svg viewBox="0 0 24 24"><use href="#lamp" width="20" height="20" /><path fill="none" stroke="#334" stroke-width="3" stroke-dasharray="3 1" d="M8 22h16M8 18h16M12 14h12M14 10h10" /><path stroke="#dde" stroke-dasharray="1 3" d="M9 22h15M9 18h15M13 14h11M15 10h9" /></svg></button>
          <button aria-label="Connections"><svg viewBox="0 0 24 24" fill="none"><path stroke="#b01818" stroke-width="1.500" d="M3 2l9 4 8-4M12 6v12M6 9l6-3 9 3M3 15l9 3 6-4M5 21l7-3 9 3" /><g fill="#fff" stroke="#2828a0"><circle cx="2.500" cy="2.500" r="1.500" /><circle cx="20.500" cy="2.500" r="1.500" /><circle cx="6.500" cy="9" r="1.500" /><circle cx="21.500" cy="10" r="1.500" /><circle cx="2.500" cy="15" r="1.500" /><circle cx="19" cy="15" r="1.500" /><circle cx="5" cy="21.500" r="1.500" /><circle cx="21.500" cy="21.500" r="1.500" /></g></svg></button>
        </div>
        <div class="flex flex-col gap-px">
          <button aria-label="Reference geometry"><svg viewBox="0 0 24 24" fill="none"><path fill="#e6f4e4" stroke="#333" stroke-width="1.300" d="M2 2l19 3v17L2 20z" /><path stroke="#1414e0" stroke-width="2" d="M7 20V5" /><path fill="#1414e0" d="M4 7l3-6 3 6z" /><circle cx="14" cy="13" r="3" stroke="#333" /><path stroke="#333" d="M9 13h10M14 8v10" /></svg></button>
          <button aria-label="Curve"><svg viewBox="0 0 24 24"><path fill="none" stroke="#222" stroke-width="1.600" d="M2 4q7-1 5 6-4 10 3 10 7-1 4-8-2-8 8-9" /><g fill="#fff" stroke="#d01818" stroke-width="1.500"><circle cx="2.500" cy="4" r="1.700" /><circle cx="9" cy="20" r="1.700" /><circle cx="21.500" cy="3" r="1.700" /></g></svg></button>
          <button aria-label="Surface"><svg viewBox="0 0 24 24"><path fill="url(#paleFace)" stroke="#333" stroke-width="1.300" d="M1 17q6-4 9-12 6 2 13 1-3 7-8 12-7-2-14-1z" /></svg></button>
          <button aria-label="Solid"><svg viewBox="0 0 24 24"><circle cx="9" cy="9" r="8" fill="url(#ball)" /><path fill="#5566e0" d="M8 13l6-3 9 2-6 3z" /><path fill="#2a35b0" d="M8 13l9 2v9l-9-3z" /><path fill="#0c1478" d="M17 15l6-3v8l-6 4z" /></svg></button>
          <button aria-label="Geometry tools"><svg viewBox="0 0 24 24"><path fill="#7f90f0" d="M3 4l9-3 11 2-7 4z" /><path fill="#2733b0" d="M3 4l13 3v14L3 17z" /><path fill="#0f1878" d="M16 7l7-4v14l-7 4z" /><path stroke="#d8a04c" stroke-width="3.500" d="M1 22l6-5" /><circle cx="10" cy="13" r="3" fill="none" stroke="#ddd" stroke-width="2" /></svg></button>
          <div class="mx-px my-[3px] h-px bg-[#a0a0a0]"></div>
          <button aria-label="Auto mesh"><svg viewBox="0 0 24 24"><path fill="#a8bcf8" stroke="#4058c8" d="M1 13l5-10 7-1 7 5-6 7z" /><path fill="#f4f4f4" stroke="#333" d="M10 10h12v12H10zM10 16h12M16 10v12" /><g fill="#fff" stroke="#3348b8"><circle cx="10" cy="10" r="1.200" /><circle cx="16" cy="10" r="1.200" /><circle cx="22" cy="10" r="1.200" /><circle cx="10" cy="16" r="1.200" /><circle cx="16" cy="16" r="1.200" /><circle cx="22" cy="16" r="1.200" /><circle cx="10" cy="22" r="1.200" /><circle cx="16" cy="22" r="1.200" /><circle cx="22" cy="22" r="1.200" /></g></svg></button>
          <button aria-label="Element and mesh" class="border border-[#90c8f6] bg-[#c0dcf3]"><svg viewBox="0 0 24 24"><path fill="#dbe6ff" stroke="#4a6ae0" d="M.5 5.500l4-4h18v9l-3 3H.5zM.5 5.500h19v8M19.500 5.500l3-4M.5 9.500h19M6.500 13.500v-8l4-4M13 13.500v-8l4-4" /><use href="#sheet" width="24" height="24" /></svg></button>
          <button aria-label="Mesh edit"><svg viewBox="0 0 24 24"><path fill="none" stroke="#333" stroke-dasharray="3 1" d="M2 4h14v14H2zM2 11h14M9 4v14" /><g fill="#fff" stroke="#3348b8"><circle cx="2" cy="4" r="1.200" /><circle cx="9" cy="3" r="1.200" /><circle cx="16" cy="3" r="1.200" /><circle cx="2" cy="11" r="1.200" /><circle cx="9" cy="11" r="1.200" /><circle cx="2" cy="19" r="1.200" /><circle cx="9" cy="18" r="1.200" /></g><path fill="#c4ced4" stroke="#667" stroke-width=".7" d="M14 7v5h4V7l4 4-2 5h-5l-4-4z" /><path stroke="#d8a060" stroke-width="4" d="M18 16v8" /></svg></button>
          <button aria-label="Model data"><svg viewBox="0 0 24 24"><path fill="#fff" stroke="#222" d="M1.500 8.500h14v11h-14z" /><path stroke="#111" stroke-width="3" stroke-dasharray="3 1.500" d="M1 6l13-4M1 9h15" /><path stroke="#c22" stroke-width="2" d="M4 12h3M4 15h3" /><path stroke="#22c" stroke-width="2" d="M8 12h3M8 15h3" /><use href="#sheet" width="24" height="24" /></svg></button>
          <div class="mx-px my-[3px] h-px bg-[#a0a0a0]"></div>
          <button class="font-['Open_Sans',sans-serif] text-[18px] font-bold leading-[18px] text-[#0b5a88]">MS</button>
          <button aria-label="Diagnose"><svg viewBox="0 0 24 24"><use href="#miniMesh" x="8" y="0" width="14" height="12" /><path fill="none" stroke="#4f7f9c" stroke-width="2" d="M2 7q-1 9 5 9t4-10M7 16q1 7 7 6 6-2 5-9" /><circle cx="19" cy="11" r="2.500" fill="#d8e4ec" stroke="#456" /></svg></button>
          <button aria-label="Process expert"><svg viewBox="0 0 24 24"><path fill="#f8f8f8" stroke="#bbb" d="M1 1h15v14H1z" /><path fill="#1c5c9c" d="M2 2h13v9H2z" /><path stroke="#fff" stroke-width="2" d="M5 4v5M9 4v4" /><path fill="#dfe4f4" stroke="#8890b8" stroke-width=".8" d="M10 24q0-9 7-9t7 9z" /><circle cx="17" cy="10" r="5" fill="#e8a868" /><path fill="#8a4c1c" d="M12 9q5-7 10 1l-5-2z" /><path stroke="#338" stroke-width="1.500" d="M17 16v6" /></svg></button>
        </div>
      </aside>
    </div>

    <footer>
      <div class="flex h-[25px] items-center justify-between border-t border-[#d9d9d9] pt-px font-['Open_Sans',sans-serif] font-bold">
        <span class="pl-[2px]">Turn label on/off for all selection</span>
        <span class="w-[149px] border-l border-[#d0d0d0] pl-1">Fast Renderer</span>
      </div>
      <div class="flex h-2 justify-between overflow-hidden bg-linear-to-r from-[#2b3f46] to-[#1d2e42] pl-[734px]">
        <div class="w-[48px] bg-[#53646c]"></div>
        <div class="mr-1 w-[98px] border-r border-[#7b8794] pt-1 text-[11px] leading-[11px] text-white">8:26</div>
      </div>
    </footer>

    <!-- red pointers over the windows -->
    <svg class="pointer-events-none absolute inset-0 size-full" fill="#ff2814">
      <path d="M175 81l-41 30-4-4-5 17 17-4-5-3z" />
      <path d="M869 423l32 10 2-4 5 14-17 1 5-4z" />
      <path d="M1332 400l68 9-1-3 14 11-16 5 3-4z" />
      <path d="M1802 86l51 26 1-5 9 17-18-2 5-3z" />
    </svg>
  </body>

  <script>
    const entities = [
      { name: "Airbag", open: true, items: ["ShellRefGM"] },
      { name: "Application" },
      { name: "Boundary" },
      { name: "Constrained" },
      { name: "Contact" },
      { name: "Damping" },
      { name: "Database" },
      { name: "Define" },
      { name: "Element" },
      { name: "Initial" },
      { name: "Load" },
      { name: "Rigidwall" },
      { name: "Section" },
      {
        name: "Set Data",
        open: true,
        used: true,
        items: ["*SET_NODE", "*SET_BEAM", "*SET_DISCR", "*SET_PART", "*SET_SEGM", "*SET_SHELL", "*SET_SOLID", "*SET_TSHELL"],
      },
    ];

    function itemClass(item) {
      if (item === "*SET_NODE") return "bg-[#f0f0f0] px-[2px] font-bold text-[#0000ff]";
      if (item === "*SET_SEGM") return "px-[2px] text-[#0000ff]";
      return "px-[2px]";
    }

    function showTree() {
      const last = entities.length - 1;
      document.querySelector("#entityTree").innerHTML = entities
        .map((group, i) => {
          const up = i ? "M4.500 0v4" : "";
          const down = i < last ? "M4.500 13v3" : "";
          const plus = group.open ? "" : "M4.500 6v5";
          const items = (group.items || [])
            .map((item, n, all) => {
              const trunk = i < last ? "M4.500 0v16" : "";
              const branch = n < all.length - 1 ? "M23.500 0v16" : "M23.500 0v8";
              return `<li class="flex h-4 items-center">
                <svg class="h-4 w-[33px] shrink-0" fill="none" stroke="#808080" stroke-dasharray="1 1"><path d="${trunk}${branch}M23 8.500h9" /></svg>
                <span class="${itemClass(item)}">${item}</span></li>`;
            })
            .join("");
          return `<li>
            <div class="flex h-4 items-center gap-[2px]">
              <svg class="h-4 w-[14px] shrink-0" fill="none"><path stroke="#808080" stroke-dasharray="1 1" d="${up}${down}M10 8.500h4" /><path fill="#f8f8f8" stroke="#919191" d="M.5 4.500h8v8h-8z" /><path stroke="#2b4a9a" d="M2 8.500h5${plus}" /></svg>
              <span class="${group.used ? "text-[#0000ff]" : ""}">${group.name}</span>
            </div>
            <ul>${items}</ul></li>`;
        })
        .join("");
    }

    // node markers of the SPH block, back layer to front layer
    function drawMesh() {
      const bottomLeft = [17, 297];
      const bottomRight = [240, 249];
      const topLeft = [60, 60];
      const topRight = [287, 11];
      const depth = [29, 26];
      const layers = 4;
      const cols = 25;
      const rows = 26;

      function nodeAt(u, v, t) {
        return [0, 1].map((a) =>
          Math.round(
            bottomLeft[a] * (1 - u) * (1 - v) +
              bottomRight[a] * u * (1 - v) +
              topLeft[a] * (1 - u) * v +
              topRight[a] * u * v +
              depth[a] * t
          )
        );
      }

      let black = "";
      let red = "";
      let blue = "";
      let white = "";
      for (let k = 0; k < layers; k++) {
        for (let i = 0; i < cols; i++) {
          for (let j = 0; j < rows; j++) {
            const [x, y] = nodeAt(i / (cols - 1), j / (rows - 1), k / (layers - 1));
            red += `M${x - 6} ${y - 4}h10l-1 10l-9-10M${x - 3} ${y + 2}l7-6`;
            const left = i === 0;
            const top = j === rows - 1;
            if ((k === 0 && (left || top)) || (left && j === 0) || (top && i === cols - 1)) {
              black += `M${x - 3} ${y}h4v-2h3v2h-2v3h-4zM${x + 3} ${y + 3}h2v2h-2z`;
            } else if (k === 1 && (i < 1 || top)) {
              black += `M${x - 2} ${y}h3v2h-3zM${x + 3} ${y - 2}h1v3h-1z`;
            } else if (k === 2 && (i < 2 || j > rows - 3)) {
              black += `M${x + 2} ${y + 1}h2v1h-2z`;
            }
            if (k === layers - 1 || (k < 3 && (left || top))) {
              blue += `M${x - 1} ${y}h2v2h-2zM${x} ${y + 1}h2v3h-2z`;
            }
            if (k === layers - 1) {
              if ((i * 7 + j * 5) % 3) white += `M${x + 4} ${y - 3}h1v1h-1z`;
              if ((i + j * 2) % 4) white += `M${x - 4} ${y + 3}h1v1h-1z`;
              if ((i * 3 + j) % 5 === 0) white += `M${x + 3} ${y + 2}h1v1h-1z`;
            }
          }
        }
      }
      document.querySelector("#mesh").innerHTML = `
        <path fill="#c4001a" d="M66 66L284 20L308 38L262 262L50 312L32 294z" />
        <path stroke="#c4001a" d="${red}" />
        <path fill="#000" d="${black}" />
        <path fill="#4a9cd0" d="${blue}" />
        <path fill="#fff" d="${white}" />`;
    }

    showTree();
    drawMesh();
  </script>
</html>
